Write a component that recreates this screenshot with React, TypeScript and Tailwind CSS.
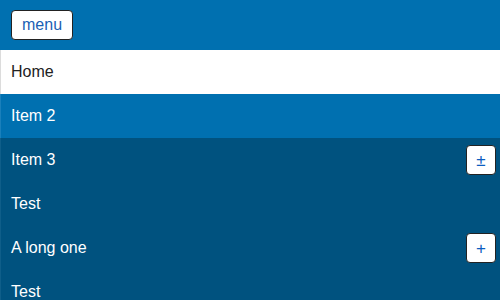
import React from "react";

const items = [
  { label: "Item 2", tone: "mid" },
  { label: "Item 3", tone: "dark", toggle: "±" },
  { label: "Test", tone: "dark" },
  { label: "A long one", tone: "dark", toggle: "+" },
  { label: "Test", tone: "dark" },
];

export default function App() {
  return (
    <div className="w-[500px] h-[300px] overflow-hidden bg-[#00527f] font-['Liberation_Sans',Arial,sans-serif] text-[16px]">
      <div className="h-[50px] bg-[#0070b0] flex items-center px-[11px]">
        <button className="h-[30px] px-[10px] bg-white border border-[#222] rounded-[4px] text-[#1a5fb4] leading-none">
          menu
        </button>
      </div>
      <ul>
        <li className="h-[44px] flex items-center pl-[10px] bg-white text-[#222] border-l border-[#dcdcdc]">
          Home
        </li>
        {items.map((item, i) => (
          <li
            key={i}
            className={`h-[44px] flex items-center justify-between pl-[10px] pr-[4px] text-white border-l ${
              item.tone === "mid"
                ? "bg-[#0070b0] border-[#1a80bb]"
                : "bg-[#00527f] border-[#0f5e89]"
            }`}
          >
            <span>{item.label}</span>
            {item.toggle && (
              <button className="w-[30px] h-[30px] bg-white border border-[#222] rounded-[4px] text-[#0b5cc0] text-[17px] leading-none flex items-center justify-center">
                {item.toggle}
              </button>
            )}
          </li>
        ))}
      </ul>
    </div>
  );
}
